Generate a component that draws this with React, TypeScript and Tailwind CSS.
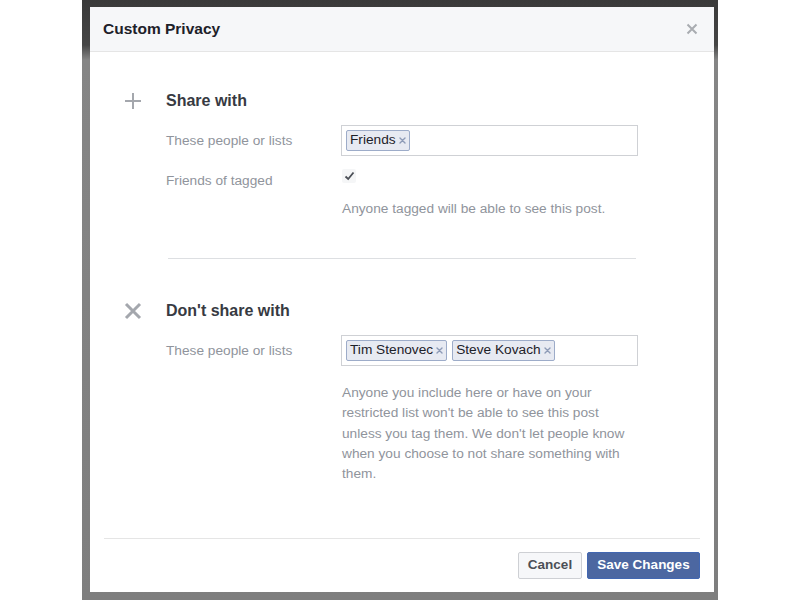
import React from 'react';

const font = { fontFamily: '"Liberation Sans", Arial, Helvetica, sans-serif' };

const TokenX = () => (
  <svg width="7" height="7" viewBox="0 0 7 7" className="ml-[3px] mt-[-1px]">
    <path d="M1 1 L6 6 M6 1 L1 6" stroke="#8d9bb7" strokeWidth="1.4" strokeLinecap="round" />
  </svg>
);

const Token = ({ label }: { label: string }) => (
  <span className="flex h-[21px] items-center rounded-[2px] border border-[#9dacc9] bg-[#e7eaf2] pl-[3px] pr-[3px] text-[13.7px] text-[#1d2129]">
    {label}
    <TokenX />
  </span>
);

const TokenInput = ({ tokens }: { tokens: string[] }) => (
  <div className="flex h-[31px] w-[297px] items-center gap-[5px] border border-[#cfd1d5] bg-white px-[4px]">
    {tokens.map((t) => (
      <Token key={t} label={t} />
    ))}
  </div>
);

const PlusIcon = () => (
  <svg width="18" height="18" viewBox="0 0 18 18">
    <path d="M9 1 V17 M1 9 H17" stroke="#a4a7ad" strokeWidth="2" />
  </svg>
);

const CrossIcon = () => (
  <svg width="18" height="18" viewBox="0 0 18 18">
    <path d="M2 2 L16 16 M16 2 L2 16" stroke="#a4a7ad" strokeWidth="3" />
  </svg>
);

const App = () => {
  return (
    <div className="flex h-[600px] w-[800px] justify-center bg-white" style={font}>
      <div className="flex h-full w-[636px] flex-col bg-[linear-gradient(to_bottom,#3a3a3a_0px,#454545_45px,#858585_60px,#7e7e7e_100%)] pb-[8px] pl-[8px] pr-[4px] pt-[7px]">
        <div className="flex h-[585px] w-[624px] flex-col bg-white">
          {/* Header */}
          <div className="flex h-[45px] items-center justify-between border-b border-[#e5e5e5] bg-[#f6f7f9] pl-[13px] pr-[16px]">
            <span className="text-[15.5px] font-bold text-[#1d2129]">Custom Privacy</span>
            <svg width="12" height="12" viewBox="0 0 12 12">
              <path d="M1.5 1.5 L10.5 10.5 M10.5 1.5 L1.5 10.5" stroke="#a9acb1" strokeWidth="2" />
            </svg>
          </div>

          {/* Body */}
          <div className="flex flex-1 flex-col pl-[34px] pt-[38px]">
            {/* Share with */}
            <div className="flex">
              <div className="flex h-[22px] w-[42px] items-center">
                <PlusIcon />
              </div>
              <div className="flex flex-col">
                <div className="h-[22px] text-[16px] font-bold leading-[22px] text-[#373a42]">Share with</div>
                <div className="mt-[13px] flex">
                  <div className="w-[175px] text-[13.7px] leading-[31px] text-[#90949c]">These people or lists</div>
                  <TokenInput tokens={['Friends']} />
                </div>
                <div className="mt-[15px] flex h-[20px]">
                  <div className="w-[175px] text-[13.7px] leading-[20px] text-[#90949c]">Friends of tagged</div>
                  <div className="ml-[1px] mt-[-2px] flex h-[14px] w-[14px] items-center justify-center rounded-[2px] bg-[#f5f6f7]">
                    <svg width="11" height="10" viewBox="0 0 11 10">
                      <path d="M1.5 5.5 L4.2 8 L9.5 1.5" stroke="#4b4f56" strokeWidth="1.8" fill="none" />
                    </svg>
                  </div>
                </div>
                <div className="ml-[176px] mt-[8px] text-[13.7px] leading-[20px] text-[#90949c]">
                  Anyone tagged will be able to see this post.
                </div>
                <div className="ml-[2px] mt-[39px] h-px w-[468px] bg-[#dddfe2]" />
              </div>
            </div>

            {/* Don't share with */}
            <div className="mt-[41px] flex">
              <div className="flex h-[22px] w-[42px] items-center">
                <CrossIcon />
              </div>
              <div className="flex flex-col">
                <div className="h-[22px] text-[16px] font-bold leading-[22px] text-[#373a42]">Don't share with</div>
                <div className="mt-[13px] flex">
                  <div className="w-[175px] text-[13.7px] leading-[31px] text-[#90949c]">These people or lists</div>
                  <TokenInput tokens={['Tim Stenovec', 'Steve Kovach']} />
                </div>
                <p className="ml-[176px] mt-[17px] w-[286px] text-[13.7px] leading-[20.3px] text-[#90949c]">
                  Anyone you include here or have on your restricted list won't be able to see this post unless you tag
                  them. We don't let people know when you choose to not share something with them.
                </p>
              </div>
            </div>
          </div>

          {/* Footer */}
          <div className="mx-[14px] flex justify-end gap-[5px] border-t border-[#e5e5e5] pb-[13px] pt-[13px]">
            <button className="h-[27px] w-[64px] rounded-[2px] border border-[#ced0d4] bg-[#f6f7f9] text-[13.5px] font-bold text-[#4b4f56]">
              Cancel
            </button>
            <button className="h-[27px] w-[113px] rounded-[2px] border border-[#4267b2] bg-[#4c67a1] text-[13.5px] font-bold text-white">
              Save Changes
            </button>
          </div>
        </div>
      </div>
    </div>
  );
};

export default App;
